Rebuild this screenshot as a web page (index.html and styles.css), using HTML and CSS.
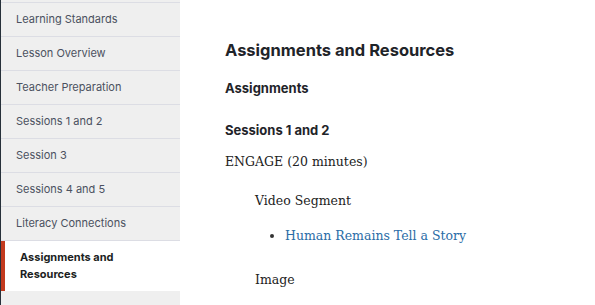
FILE: index.html
```html
<!DOCTYPE html>
<html>

<head>
	<meta charset="utf-8">
	<meta name="viewport" content="width=device-width, initial-scale=1.0">
	<title>Assignments and Resources</title>
	<link rel="stylesheet" href="styles.css">
</head>

<body>
	<div class="page">
		<nav class="sidebar">
			<ul class="nav-list">
				<li><a href="#">Learning Standards</a></li>
				<li><a href="#">Lesson Overview</a></li>
				<li><a href="#">Teacher Preparation</a></li>
				<li><a href="#">Sessions 1 and 2</a></li>
				<li><a href="#">Session 3</a></li>
				<li><a href="#">Sessions 4 and 5</a></li>
				<li><a href="#">Literacy Connections</a></li>
				<li class="active"><a href="#">Assignments and Resources</a></li>
			</ul>
		</nav>
		<main class="content">
			<h2>Assignments and Resources</h2>
			<h3>Assignments</h3>
			<h4>Sessions 1 and 2</h4>
			<p>ENGAGE (20 minutes)</p>
			<div class="indent">
				<p>Video Segment</p>
				<ul class="links">
					<li><a href="#">Human Remains Tell a Story</a></li>
				</ul>
				<p>Image</p>
			</div>
		</main>
	</div>
</body>

</html>
```

FILE: styles.css
```css
* {
	margin: 0;
	padding: 0;
	box-sizing: border-box;
}

body {
	background: #fff;
	font-family: "Inter", sans-serif;
	overflow: hidden;
}

.page {
	display: flex;
	height: 305px;
}

.sidebar {
	width: 180px;
	flex-shrink: 0;
	background: #efefef;
	border-left: 1px solid #27303a;
	padding-top: 2px;
}

.nav-list {
	list-style: none;
	border-top: 1px solid #dcdde4;
}

.nav-list li {
	border-bottom: 1px solid #dcdde4;
}

.nav-list a {
	display: block;
	height: 33px;
	line-height: 33px;
	padding-left: 15px;
	font-size: 11px;
	color: #4b5160;
	text-decoration: none;
}

.nav-list .active {
	background: #fff;
	border-left: 4px solid #c23a1e;
	border-bottom: none;
}

.nav-list .active a {
	height: 50px;
	line-height: 17px;
	padding: 8px 40px 0 15px;
	font-weight: 700;
	color: #1b1e22;
}

.content {
	padding: 40px 0 0 45px;
	color: #1f2429;
}

h2 {
	font-size: 16.5px;
	font-weight: 700;
	margin-bottom: 20px;
}

h3,
h4 {
	font-size: 13px;
	font-weight: 700;
}

h3 {
	margin-bottom: 26px;
}

h4 {
	margin-bottom: 14px;
}

.content p {
	font-family: "DejaVu Serif", serif;
	font-size: 12.5px;
	line-height: 20px;
	color: #222;
}

.indent {
	padding: 19px 0 0 30px;
}

.links {
	margin: 15px 0 24px 30px;
	list-style: disc;
	font-family: "DejaVu Serif", serif;
	font-size: 12.5px;
	line-height: 20px;
	color: #333;
}

.links a {
	color: #2a6ca6;
	text-decoration: none;
}
```
